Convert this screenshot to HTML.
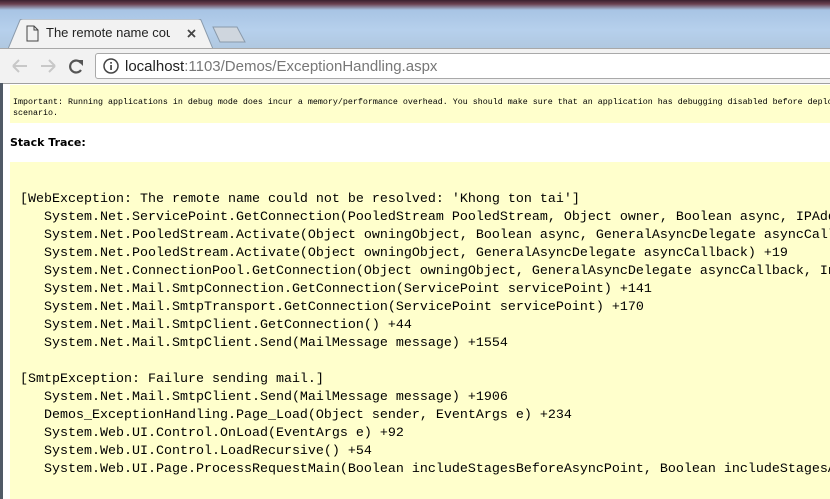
<!DOCTYPE html>
<html><head><style>
html,body{margin:0;width:830px;height:499px;overflow:hidden}
body{background:#fff;position:relative;font-family:"Liberation Sans",sans-serif}
.top{position:absolute;left:0;top:0;width:830px;height:48px;background:linear-gradient(#3a2030 0,#6a4050 4px,#a8c4e4 10px,#b6d0ec 30px,#b0c8e0 48px)}
.toolbar{position:absolute;left:0;top:48px;width:830px;height:34px;background:#f2f2f2;border-top:1px solid #a8a8a8;border-bottom:1px solid #a0a0a0;overflow:hidden}
.addr{position:absolute;left:95px;top:4px;width:740px;height:26px;background:#fff;border:1px solid #a9a9a9;border-radius:3px;box-sizing:border-box}
.url{position:absolute;left:29px;top:4px;font-size:15px;color:#222}
.url span{color:#777}
.page{position:absolute;left:0;top:83px;width:830px;height:416px;border-left:3px solid #505a66;box-sizing:border-box;overflow:hidden}
.warn{position:absolute;left:7px;top:2px;width:830px;height:38px;background:#ffffcc;font-family:"Liberation Mono",monospace;font-size:8.33px;line-height:11px;padding-top:12px;padding-left:3px;box-sizing:border-box;white-space:pre;color:#000}
.st{position:absolute;left:7px;top:53px;font-family:"DejaVu Sans",sans-serif;font-weight:bold;font-size:11px}
pre{position:absolute;left:7px;top:79px;width:830px;height:340px;margin:0;background:#ffffcc;font-family:"Liberation Mono",monospace;font-size:13.33px;line-height:18px;padding:29px 0 0 10px;box-sizing:border-box;color:#000}
</style></head><body>
<div class="top"></div>
<svg width="205" height="30" style="position:absolute;left:8px;top:19px">
<path d="M0 30 L12 1 Q13 0 15 0 L190 0 Q192 0 193 1 L205 30 Z" fill="#f2f2f2" stroke="#8a9aab"/>
<path d="M19 7 h7 l4 4 v11 h-11 z M26 7 v4 h4" fill="none" stroke="#444" stroke-width="1"/>
<path d="M180 11 l7 7 M187 11 l-7 7" stroke="#444" stroke-width="1.8"/>
</svg>
<div style="position:absolute;left:46px;top:25px;font-size:13px;color:#222;white-space:nowrap;width:124px;overflow:hidden">The remote name could n</div>
<svg width="40" height="20" style="position:absolute;left:210px;top:25px"><path d="M3 2 L27 2 L35 17 L10 17 Z" fill="#cfd6de" stroke="#8a9aab"/></svg>
<div class="toolbar">
<svg width="90" height="34" style="position:absolute;left:0;top:0">
<path d="M13 17 h14 M13 17 l6 -6 M13 17 l6 6" stroke="#c8c8c8" stroke-width="2" fill="none"/>
<path d="M55 17 h-14 M55 17 l-6 -6 M55 17 l-6 6" stroke="#c8c8c8" stroke-width="2" fill="none"/>
<path d="M81 14 A6 6 0 1 0 81 21" stroke="#555" stroke-width="2.2" fill="none"/>
<path d="M77 11 L83 11 L83 17 Z" fill="#555"/>
</svg>
<div class="addr">
<svg width="20" height="20" style="position:absolute;left:5px;top:2px"><circle cx="10" cy="10" r="7" fill="none" stroke="#444" stroke-width="1.5"/><rect x="9.2" y="9" width="1.7" height="5" fill="#444"/><rect x="9.2" y="6" width="1.7" height="1.7" fill="#444"/></svg>
<div class="url">localhost<span>:1103/Demos/ExceptionHandling.aspx</span></div>
</div>
</div>
<div class="page">
<div class="warn">Important: Running applications in debug mode does incur a memory/performance overhead. You should make sure that an application has debugging disabled before deploying into production
scenario.</div>
<div class="st">Stack Trace:</div>
<pre>[WebException: The remote name could not be resolved: 'Khong ton tai']
   System.Net.ServicePoint.GetConnection(PooledStream PooledStream, Object owner, Boolean async, IPAddress&amp; address
   System.Net.PooledStream.Activate(Object owningObject, Boolean async, GeneralAsyncDelegate asyncCallback) +221
   System.Net.PooledStream.Activate(Object owningObject, GeneralAsyncDelegate asyncCallback) +19
   System.Net.ConnectionPool.GetConnection(Object owningObject, GeneralAsyncDelegate asyncCallback, Int32 creat
   System.Net.Mail.SmtpConnection.GetConnection(ServicePoint servicePoint) +141
   System.Net.Mail.SmtpTransport.GetConnection(ServicePoint servicePoint) +170
   System.Net.Mail.SmtpClient.GetConnection() +44
   System.Net.Mail.SmtpClient.Send(MailMessage message) +1554

[SmtpException: Failure sending mail.]
   System.Net.Mail.SmtpClient.Send(MailMessage message) +1906
   Demos_ExceptionHandling.Page_Load(Object sender, EventArgs e) +234
   System.Web.UI.Control.OnLoad(EventArgs e) +92
   System.Web.UI.Control.LoadRecursive() +54
   System.Web.UI.Page.ProcessRequestMain(Boolean includeStagesBeforeAsyncPoint, Boolean includeStagesAfterAsync
</pre>
</div>
</body></html>
